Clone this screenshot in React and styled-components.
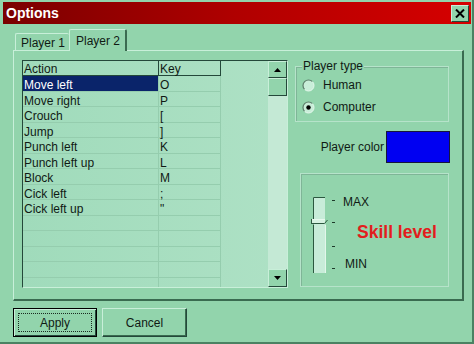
import React from "react";
import styled, { createGlobalStyle } from "styled-components";

const C = {
  bg: "#92d4ac",
  list: "#a3dcbd",
  light: "#c8efd9",
  dark: "#3a6b50",
  darker: "#24483a",
  text: "#101a14",
  grid: "#95cdae",
  track: "#c4e9d5",
  navy: "#0a246a",
};

const Global = createGlobalStyle`
  html, body { margin: 0; padding: 0; background: ${C.bg}; overflow: hidden; }
  body { font-family: "Liberation Sans", Arial, sans-serif; font-size: 12px; color: ${C.text}; }
  * { box-sizing: border-box; }
`;

const Window = styled.div`
  width: 474px;
  height: 344px;
  background: ${C.bg};
  border-right: 2px solid #4a8262;
  border-bottom: 2px solid #4a8262;
  padding: 2px 1px 0 3px;
  display: flex;
  flex-direction: column;
`;

const TitleBar = styled.div`
  height: 22px;
  background: linear-gradient(to right, #7a0000, #b00000 50%, #d60000);
  display: flex;
  align-items: center;
  justify-content: space-between;
  padding: 0 2px 0 3px;
`;

const Title = styled.span`
  color: #fff;
  font-weight: bold;
  font-size: 14px;
`;

const CloseBtn = styled.div`
  width: 18px;
  height: 17px;
  background: ${C.bg};
  border: 1px solid;
  border-color: ${C.light} ${C.darker} ${C.darker} ${C.light};
  display: flex;
  align-items: center;
  justify-content: center;
`;

const Body = styled.div`
  margin-left: 10px;
  width: 451px;
  display: flex;
  flex-direction: column;
`;

const TabStrip = styled.div`
  display: flex;
  align-items: flex-end;
  padding-left: 2px;
  margin-top: 5px;
  height: 21px;
  position: relative;
  z-index: 1;
`;

const Tab = styled.div`
  height: ${(p) => (p.$active ? 22 : 17)}px;
  width: ${(p) => p.$w}px;
  padding: ${(p) => (p.$active ? 4 : 2)}px 0 0 ${(p) => p.$pl}px;
  line-height: 14px;
  background: ${C.bg};
  border-top: 1px solid ${C.light};
  border-left: 1px solid ${C.light};
  border-right: ${(p) => (p.$active ? `2px solid ${C.dark}` : "none")};
  margin-bottom: ${(p) => (p.$active ? -1 : 0)}px;
  border-radius: 2px 2px 0 0;
`;

const Panel = styled.div`
  width: 451px;
  height: 251px;
  border-top: 1px solid ${C.light};
  border-left: 1px solid ${C.light};
  border-right: 2px solid ${C.dark};
  border-bottom: 2px solid ${C.dark};
  padding: 9px 0 0 8px;
  display: flex;
  gap: 7px;
  align-items: flex-start;
`;

const ListBox = styled.div`
  width: 266px;
  height: 228px;
  border: 1px solid;
  border-color: ${C.darker} ${C.light} ${C.light} ${C.darker};
  background: linear-gradient(to right, #a0dbbb, #aee1c5);
  display: flex;
`;

const Table = styled.div`
  flex: 1;
  display: flex;
  flex-direction: column;
  overflow: hidden;
`;

const HeadRow = styled.div`
  display: flex;
  height: 15px;
  flex-shrink: 0;
`;

const HeadCell = styled.div`
  width: ${(p) => p.$w}px;
  height: 15px;
  border-right: 1px solid ${C.darker};
  border-bottom: 1px solid ${C.darker};
  padding: 1px 0 0 1px;
  line-height: 14px;
  white-space: nowrap;
`;

const Row = styled.div`
  display: flex;
  height: 15.5px;
  flex-shrink: 0;
`;

const Cell = styled.div`
  width: ${(p) => p.$w}px;
  height: 15.5px;
  border-right: 1px solid ${C.grid};
  border-bottom: 1px solid ${C.grid};
  padding: 3px 0 0 1px;
  line-height: 13px;
  white-space: nowrap;
  background: ${(p) => (p.$sel ? C.navy : "transparent")};
  color: ${(p) => (p.$sel ? "#fff" : C.text)};
`;

const ScrollBar = styled.div`
  width: 19px;
  display: flex;
  flex-direction: column;
`;

const ScrollBtn = styled.div`
  height: ${(p) => p.$h}px;
  background: ${C.bg};
  border: 1px solid;
  border-color: ${C.light} ${C.darker} ${C.darker} ${C.light};
  display: flex;
  align-items: center;
  justify-content: center;
  flex-shrink: 0;
`;

const Track = styled.div`
  flex: 1;
  background: ${C.track};
`;

const RightCol = styled.div`
  width: 154px;
  display: flex;
  flex-direction: column;
`;

const Group = styled.div`
  position: relative;
  width: ${(p) => p.$w}px;
  height: ${(p) => p.$h}px;
  margin: ${(p) => p.$m};
  border: 1px solid #b6e3ca;
  box-shadow: inset 1px 1px 0 #7fb597;
  padding: ${(p) => p.$pad};
`;

const Legend = styled.span`
  position: absolute;
  top: -8px;
  left: 6px;
  background: ${C.bg};
  padding: 0 1px;
  line-height: 14px;
`;

const RadioRow = styled.div`
  display: flex;
  align-items: center;
  height: 22px;
  gap: 8px;
`;

const ColorRow = styled.div`
  display: flex;
  justify-content: flex-end;
  align-items: center;
  gap: 2px;
  height: 32px;
  margin-top: 9px;
  margin-right: -1px;
`;

const Swatch = styled.div`
  width: 64px;
  height: 32px;
  background: #0000f2;
  border: 1px solid #16163a;
`;

const SkillInner = styled.div`
  display: flex;
  align-items: flex-start;
`;

const Labels = styled.div`
  display: flex;
  flex-direction: column;
`;

const Label = styled.span`
  line-height: ${(p) => p.$lh || 12}px;
  margin: ${(p) => p.$m};
  white-space: nowrap;
  ${(p) =>
    p.$skill &&
    `color: #e21d1d; font-weight: bold; font-size: 17.5px;`}
`;

const Buttons = styled.div`
  display: flex;
  gap: 5px;
  margin-top: 7px;
`;

const Button = styled.div`
  position: relative;
  width: ${(p) => p.$w}px;
  height: 29px;
  background: ${C.bg};
  border: 1px solid;
  border-color: ${(p) => (p.$def ? "#000" : `${C.light} ${C.darker} ${C.darker} ${C.light}`)};
  box-shadow: ${(p) =>
    p.$def
      ? `inset 1px 1px 0 ${C.light}, inset -1px -1px 0 ${C.darker}`
      : `inset -1px -1px 0 ${C.dark}`};
  display: flex;
  align-items: center;
  justify-content: center;
  padding-top: 1px;
`;

const Focus = styled.span`
  position: absolute;
  inset: 4px;
  border: 1px dotted #1a2a20;
`;

const Radio = ({ checked }) => (
  <svg width="13" height="13" viewBox="0 0 13 13">
    <circle cx="6.5" cy="6.5" r="5.5" fill="#c9eed9" />
    <path d="M2.6 10.4 A5.5 5.5 0 0 1 10.4 2.6" fill="none" stroke="#5d7d6a" strokeWidth="1.2" />
    <path d="M10.4 2.6 A5.5 5.5 0 0 1 2.6 10.4" fill="none" stroke="#e4f7ec" strokeWidth="1" />
    {checked && <circle cx="6.5" cy="6.5" r="2.2" fill="#000" />}
  </svg>
);

const Arrow = ({ up }) => (
  <svg width="7" height="4" viewBox="0 0 7 4">
    <path d={up ? "M0 4 L3.5 0 L7 4 Z" : "M0 0 L3.5 4 L7 0 Z"} fill="#000" />
  </svg>
);

const Slider = () => (
  <svg width="28" height="82" viewBox="0 0 28 82">
    <rect x="3" y="2" width="12" height="22" fill="#c8ecd9" />
    <path d="M3.5 24 V2.5 H15" fill="none" stroke="#2c5840" />
    <rect x="3" y="29" width="12" height="49" fill="#c8ecd9" />
    <path d="M3.5 78 V29.5" fill="none" stroke="#2c5840" />
    <path d="M15.5 29.5 V78" fill="none" stroke="#e2f6ea" />
    <rect x="1" y="24" width="14" height="5" fill="#d6f2e2" />
    <path d="M1 24.5 H15" stroke="#e8f8ee" />
    <path d="M1 28.5 H14.5 L17.5 25" fill="none" stroke="#2c5840" />
    <path d="M1.5 24 V29" stroke="#2c5840" />
    <path d="M22 5.5 H25 M22 27.5 H25 M22 51.5 H25 M22 73.5 H25" stroke="#1e3a2a" />
  </svg>
);

const rows = [
  ["Move left", "O"],
  ["Move right", "P"],
  ["Crouch", "["],
  ["Jump", "]"],
  ["Punch left", "K"],
  ["Punch left up", "L"],
  ["Block", "M"],
  ["Cick left", ";"],
  ["Cick left up", "\""],
  ["", ""],
  ["", ""],
  ["", ""],
  ["", ""],
  ["", ""],
];

export default function App() {
  return (
    <>
      <Global />
      <Window>
        <TitleBar>
          <Title>Options</Title>
          <CloseBtn>
            <svg width="10" height="9" viewBox="0 0 10 9">
              <path d="M1 0.5 L9 8.5 M9 0.5 L1 8.5" stroke="#000" strokeWidth="2" />
            </svg>
          </CloseBtn>
        </TitleBar>
        <Body>
          <TabStrip>
            <Tab $w={54} $pl={5}>Player 1</Tab>
            <Tab $active $w={58} $pl={6}>Player 2</Tab>
          </TabStrip>
          <Panel>
            <ListBox>
              <Table>
                <HeadRow>
                  <HeadCell $w={136}>Action</HeadCell>
                  <HeadCell $w={62}>Key</HeadCell>
                </HeadRow>
                {rows.map(([a, k], i) => (
                  <Row key={i}>
                    <Cell $w={136} $sel={i === 0}>{a}</Cell>
                    <Cell $w={62}>{k}</Cell>
                  </Row>
                ))}
              </Table>
              <ScrollBar>
                <ScrollBtn $h={17}><Arrow up /></ScrollBtn>
                <ScrollBtn $h={18} />
                <Track />
                <ScrollBtn $h={18}><Arrow /></ScrollBtn>
              </ScrollBar>
            </ListBox>
            <RightCol>
              <Group $w={154} $h={56} $m="6px 0 0 0" $pad="7px 0 0 6px">
                <Legend>Player type</Legend>
                <RadioRow><Radio /> Human</RadioRow>
                <RadioRow><Radio checked /> Computer</RadioRow>
              </Group>
              <ColorRow>
                <span>Player color</span>
                <Swatch />
              </ColorRow>
              <Group $w={149} $h={114} $m="10px 0 0 5px" $pad="21px 0 0 9px">
                <SkillInner>
                  <Slider />
                  <Labels>
                    <Label $m="1px 0 0 5px">MAX</Label>
                    <Label $skill $lh={20} $m="14px 0 0 19px">Skill level</Label>
                    <Label $m="16px 0 0 7px">MIN</Label>
                  </Labels>
                </SkillInner>
              </Group>
            </RightCol>
          </Panel>
          <Buttons>
            <Button $def $w={84}><Focus />Apply</Button>
            <Button $w={85}>Cancel</Button>
          </Buttons>
        </Body>
      </Window>
    </>
  );
}
